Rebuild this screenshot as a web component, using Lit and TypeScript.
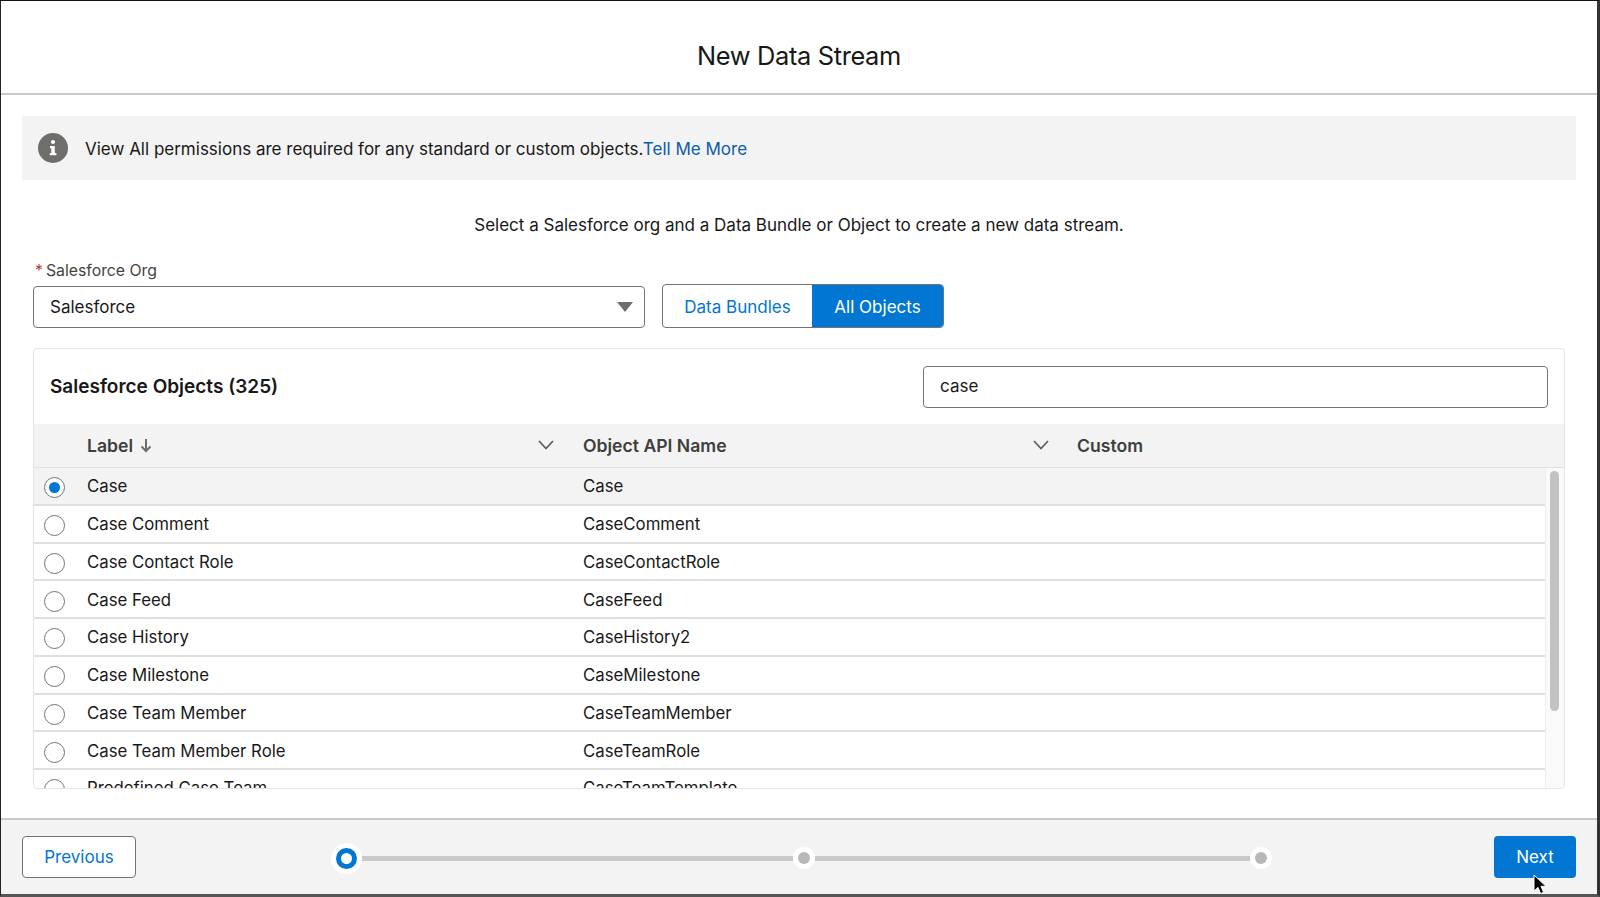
import { LitElement, html, css } from 'lit';
import { customElement } from 'lit/decorators.js';

const rows = [
  ['Case', 'Case'],
  ['Case Comment', 'CaseComment'],
  ['Case Contact Role', 'CaseContactRole'],
  ['Case Feed', 'CaseFeed'],
  ['Case History', 'CaseHistory2'],
  ['Case Milestone', 'CaseMilestone'],
  ['Case Team Member', 'CaseTeamMember'],
  ['Case Team Member Role', 'CaseTeamRole'],
  ['Predefined Case Team', 'CaseTeamTemplate'],
];

const chevron = html`<svg class="chev" width="18" height="12" viewBox="0 0 18 12"><path d="M2 2l7 7.5L16 2" fill="none" stroke="#5c5c5c" stroke-width="1.7"/></svg>`;

@customElement('app-root')
export class AppRoot extends LitElement {
  static styles = css`
    :host {
      display: block;
      font-family: Inter, 'Liberation Sans', sans-serif;
      font-size: 17px;
      color: #181818;
    }
    * { box-sizing: border-box; }
    .frame {
      position: relative;
      height: 897px;
      display: flex;
      flex-direction: column;
      background: #fff;
      border-top: 1px solid #111;
      border-left: 1px solid #222;
      border-right: 3px solid #333;
      border-bottom: 3px solid #555;
      overflow: hidden;
    }
    .header {
      height: 94px;
      flex: none;
      display: flex;
      align-items: center;
      justify-content: center;
      border-bottom: 2px solid #c9c9c9;
      font-size: 25.4px;
      letter-spacing: -0.35px;
      padding-top: 16px;
    }
    .main {
      flex: 1;
      padding: 21px 21px 0 21px;
    }
    .banner {
      height: 64px;
      background: #f3f3f3;
      display: flex;
      align-items: center;
      padding-left: 16px;
      gap: 17px;
    }
    .banner span { padding-top: 2px; }
    a { color: #0b5cab; text-decoration: none; }
    .intro {
      margin-top: 33px;
      line-height: 24px;
      text-align: center;
    }
    .content { padding: 0 11px 0 11px; }
    .form {
      margin-top: 24px;
      display: flex;
      align-items: flex-end;
      gap: 17px;
    }
    .field { width: 612px; }
    .label {
      height: 20px;
      line-height: 20px;
      font-size: 15.8px;
      color: #444;
      margin-bottom: 5px;
      padding-left: 2px;
    }
    .label b { color: #c23934; font-weight: 400; margin-right: 3px; }
    .select {
      height: 42px;
      border: 1px solid #747474;
      border-radius: 4px;
      display: flex;
      align-items: center;
      justify-content: space-between;
      padding: 0 11px 0 16px;
    }
    .toggle {
      display: flex;
      height: 44px;
      width: 282px;
      border: 1px solid #747474;
      border-radius: 4px;
      overflow: hidden;
    }
    .toggle div { display: flex; align-items: center; justify-content: center; padding-top: 1px; }
    .toggle .off { width: 149px; color: #0176d3; }
    .toggle .on { flex: 1; background: #0176d3; color: #fff; }
    .card {
      margin-top: 20px;
      height: 441px;
      border: 1px solid #e5e5e5;
      border-radius: 4px;
      overflow: hidden;
    }
    .bar {
      height: 75px;
      display: flex;
      align-items: center;
      justify-content: space-between;
      padding: 0 16px 0 16px;
    }
    .bar h2 { margin: 0; font-size: 19px; font-weight: 600; }
    .search {
      width: 625px;
      height: 42px;
      border: 1px solid #747474;
      border-radius: 4px;
      display: flex;
      align-items: center;
      padding-left: 16px;
      padding-bottom: 1px;
    }
    .thead {
      height: 44px;
      background: #f3f3f3;
      border-bottom: 1px solid #e0e0e0;
      display: grid;
      grid-template-columns: 53px 496px 494px 1fr;
      align-items: center;
      font-weight: 600;
      font-size: 17.6px;
      color: #3e3e3c;
      padding-bottom: 1px;
    }
    .thead > div { display: flex; align-items: center; justify-content: space-between; }
    .thead .c1 { padding-right: 28px; }
    .thead .c2 { padding-right: 27px; }
    .sort { display: flex; align-items: center; gap: 7px; }
    .tbody { display: flex; height: 321px; overflow: hidden; }
    .rows { width: 1511px; flex: none; font-size: 16.8px; }
    .row {
      height: 37.75px;
      display: grid;
      grid-template-columns: 53px 496px 1fr;
      align-items: center;
      border-bottom: 2px solid #e0e0e0;
      padding-top: 1px;
    }
    .row.sel { background: #f3f3f3; }
    .radio {
      width: 21px;
      height: 21px;
      margin: 3px 0 0 10px;
      border: 1px solid #747474;
      border-radius: 50%;
      background: #fff;
      display: flex;
      align-items: center;
      justify-content: center;
    }
    .radio i { width: 11px; height: 11px; border-radius: 50%; background: #0176d3; }
    .track {
      flex: 1;
      background: #fafafa;
      border-left: 1px solid #eee;
      padding: 3px 0 0 4px;
    }
    .thumb { width: 9px; height: 240px; border-radius: 5px; background: #c2c2c2; }
    .footer {
      flex: none;
      height: 76px;
      background: #f3f3f3;
      border-top: 2px solid #c9c9c9;
      display: flex;
      align-items: center;
      padding: 0 21px;
    }
    .btn {
      height: 42px;
      border-radius: 4px;
      display: flex;
      align-items: center;
      justify-content: center;
    }
    .prev { width: 114px; background: #fff; border: 1px solid #747474; color: #0176d3; }
    .next { width: 82px; background: #0176d3; color: #fff; }
    .steps {
      flex: none;
      width: 931px;
      margin: 2px auto 0 200px;
      display: flex;
      align-items: center;
    }
    .line { height: 5px; background: #c9c9c9; }
    .line.a { width: 441px; }
    .line.b { width: 445px; }
    .dot, .cur { position: relative; z-index: 1; }
    .dot { width: 12px; height: 12px; border-radius: 50%; background: #b8b8b8; box-shadow: 0 0 0 5px #fff; }
    .cur {
      width: 21px;
      height: 21px;
      border: 5px solid #0176d3;
      border-radius: 50%;
      background: #fff;
      box-shadow: 0 0 0 5px #fff;
    }
    .pointer { position: absolute; left: 1531px; top: 873px; }
  `;

  render() {
    return html`
      <div class="frame">
        <div class="header">New Data Stream</div>
        <div class="main">
          <div class="banner">
            <svg width="30" height="30" viewBox="0 0 30 30">
              <circle cx="15" cy="15" r="15" fill="#706e6b"/>
              <circle cx="15" cy="9" r="2.1" fill="#fff"/>
              <path d="M12 13h4.8v7h1.6v2.2h-6.6V20h1.5v-4.8H12z" fill="#fff"/>
            </svg>
            <span>View All permissions are required for any standard or custom objects.<a>Tell Me More</a></span>
          </div>
          <div class="intro">Select a Salesforce org and a Data Bundle or Object to create a new data stream.</div>
          <div class="content">
            <div class="form">
              <div class="field">
                <div class="label"><b>*</b>Salesforce Org</div>
                <div class="select">
                  <span>Salesforce</span>
                  <svg width="16" height="10" viewBox="0 0 16 10"><path d="M0 0h16L8 10z" fill="#706e6b"/></svg>
                </div>
              </div>
              <div class="toggle">
                <div class="off">Data Bundles</div>
                <div class="on">All Objects</div>
              </div>
            </div>
            <div class="card">
              <div class="bar">
                <h2>Salesforce Objects (325)</h2>
                <div class="search">case</div>
              </div>
              <div class="thead">
                <span></span>
                <div class="c1">
                  <span class="sort">Label
                    <svg width="12" height="15" viewBox="0 0 12 15"><path d="M6 1v12M1.5 8.5L6 13l4.5-4.5" fill="none" stroke="#706e6b" stroke-width="2"/></svg>
                  </span>
                  ${chevron}
                </div>
                <div class="c2">
                  <span>Object API Name</span>
                  ${chevron}
                </div>
                <div>Custom</div>
              </div>
              <div class="tbody">
                <div class="rows">
                  ${rows.map(
                    (r, i) => html`
                      <div class="row ${i === 0 ? 'sel' : ''}">
                        <div class="radio">${i === 0 ? html`<i></i>` : ''}</div>
                        <span>${r[0]}</span>
                        <span>${r[1]}</span>
                      </div>
                    `
                  )}
                </div>
                <div class="track"><div class="thumb"></div></div>
              </div>
            </div>
          </div>
        </div>
        <div class="footer">
          <div class="btn prev">Previous</div>
          <div class="steps">
            <div class="cur"></div>
            <div class="line a"></div>
            <div class="dot"></div>
            <div class="line b"></div>
            <div class="dot"></div>
          </div>
          <div class="btn next">Next</div>
        </div>
        <svg class="pointer" width="16" height="22" viewBox="0 0 16 22">
          <path d="M2 1v16l4-3.6 2.6 6.2 3-1.3-2.6-6H14z" fill="#000" stroke="#fff" stroke-width="1"/>
        </svg>
      </div>
    `;
  }
}
